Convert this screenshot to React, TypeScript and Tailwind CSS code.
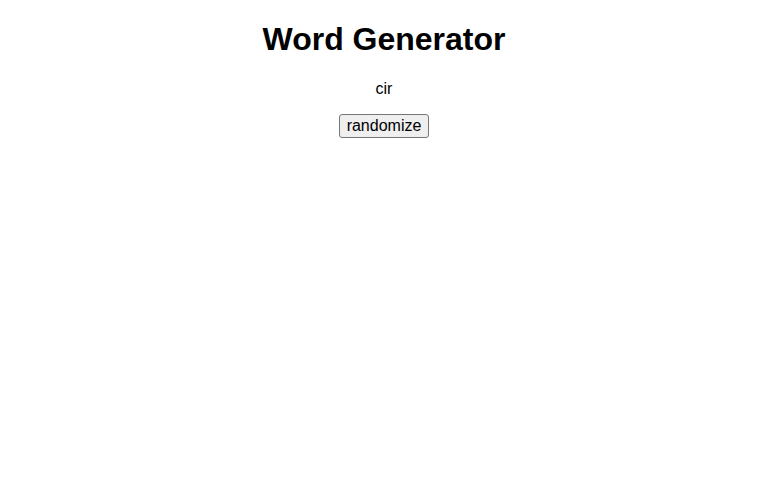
import { useState } from 'react';

const syllables = ['cir', 'ba', 'lon', 'tre', 'mo', 'ski', 'dur', 'pa', 'fen', 'os'];

export default function App() {
  const [word, setWord] = useState('cir');

  const randomize = () => {
    const count = 1 + Math.floor(Math.random() * 3);
    let w = '';
    for (let i = 0; i < count; i++) {
      w += syllables[Math.floor(Math.random() * syllables.length)];
    }
    setWord(w);
  };

  return (
    <div className="min-h-screen bg-white text-black text-center font-['Liberation_Sans',Arial,sans-serif]">
      <h1 className="text-[32px] leading-[37px] font-bold pt-[21px] mb-[22px]">Word Generator</h1>
      <p className="text-base leading-[18px] mb-4">{word}</p>
      <button
        onClick={randomize}
        className="h-6 px-[7px] text-base leading-[18px] bg-[#efefef] border border-[#767676] rounded-[3px] hover:bg-[#e5e5e5]"
      >
        randomize
      </button>
    </div>
  );
}
